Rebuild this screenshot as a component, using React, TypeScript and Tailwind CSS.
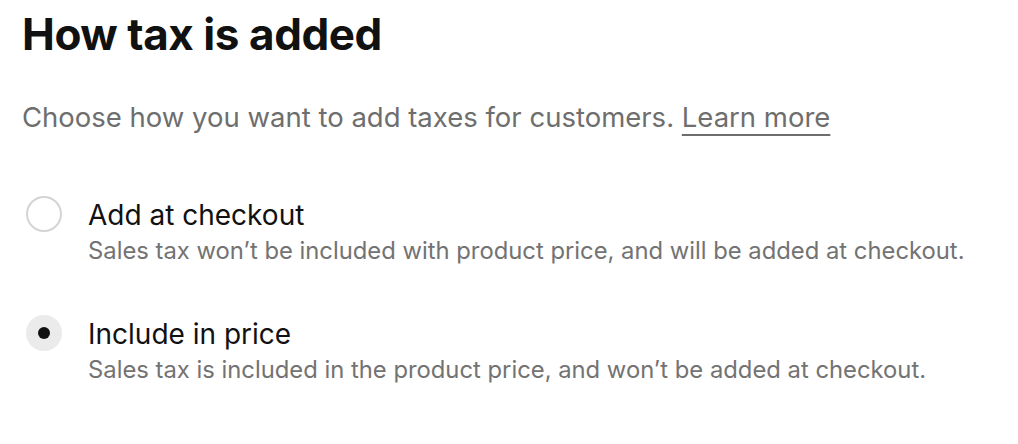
import { useState } from "react";

type Option = {
  id: string;
  label: string;
  description: string;
};

const options: Option[] = [
  {
    id: "checkout",
    label: "Add at checkout",
    description:
      "Sales tax won’t be included with product price, and will be added at checkout.",
  },
  {
    id: "price",
    label: "Include in price",
    description:
      "Sales tax is included in the product price, and won’t be added at checkout.",
  },
];

export default function App() {
  const [selected, setSelected] = useState("price");

  return (
    <div className="min-h-screen bg-white px-[22px] pt-[8px] font-['Inter',sans-serif]">
      <h1 className="text-[44px] font-bold leading-[52px] tracking-[-0.01em] text-[#111111]">
        How tax is added
      </h1>
      <p className="mt-[40px] text-[27.5px] leading-[34px] text-[#6e6e6e]">
        Choose how you want to add taxes for customers.{" "}
        <a href="#" className="underline decoration-2 underline-offset-[7px]">
          Learn more
        </a>
      </p>

      <div className="mt-[61px] flex flex-col gap-[48px]">
        {options.map((o) => (
          <label key={o.id} className="flex cursor-pointer items-start gap-[26px]">
            <input
              type="radio"
              name="tax"
              className="sr-only"
              checked={selected === o.id}
              onChange={() => setSelected(o.id)}
            />
            <span
              className={`mt-[1px] ml-[4px] flex h-[36px] w-[36px] shrink-0 items-center justify-center rounded-full ${
                selected === o.id
                  ? "bg-[#ebebeb]"
                  : "border-2 border-[#d4d4d4] bg-white"
              }`}
            >
              {selected === o.id && (
                <span className="h-[12px] w-[12px] rounded-full bg-[#111111]" />
              )}
            </span>
            <span className="flex flex-col pt-[3px]">
              <span className="text-[28px] leading-[34px] text-[#111111]">
                {o.label}
              </span>
              <span className="mt-[4px] text-[23.8px] leading-[30px] text-[#737373]">
                {o.description}
              </span>
            </span>
          </label>
        ))}
      </div>
    </div>
  );
}
